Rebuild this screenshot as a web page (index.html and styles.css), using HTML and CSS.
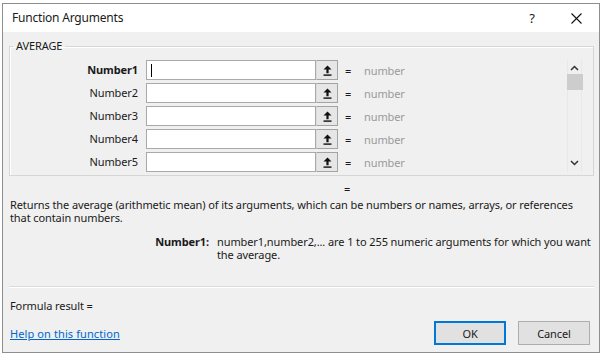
FILE: index.html
```html
<!DOCTYPE html>
<html>
<head>
<meta charset="utf-8">
<link rel="stylesheet" href="styles.css">
</head>
<body>
<div class="dialog">
  <div class="titlebar">
    <span class="title">Function Arguments</span>
    <span class="cap-btn help">?</span>
    <span class="cap-btn close">
      <svg width="11" height="11" viewBox="0 0 11 11"><path d="M0.5 0.5 L10.5 10.5 M10.5 0.5 L0.5 10.5" stroke="#111" stroke-width="1.1" fill="none"/></svg>
    </span>
  </div>
  <div class="content">
    <fieldset class="group">
      <legend>AVERAGE</legend>
      <div class="args">
        <div class="scrollbar">
          <svg class="arrow" width="9" height="6" viewBox="0 0 9 6"><path d="M1 5 L4.5 1.5 L8 5" stroke="#333" stroke-width="1.5" fill="none"/></svg>
          <div class="thumb"></div>
          <div class="track"></div>
          <svg class="arrow" width="9" height="6" viewBox="0 0 9 6"><path d="M1 1 L4.5 4.5 L8 1" stroke="#333" stroke-width="1.5" fill="none"/></svg>
        </div>

        <div class="arg-label bold">Number1</div>
        <div class="arg-input"><span class="caret"></span></div>
        <div class="ref-btn"><svg width="9" height="11" viewBox="0 0 9 11"><path d="M4.5 0.5 L8.5 4.5 H5.6 V8.2 H3.4 V4.5 H0.5 Z" fill="#111"/><rect x="0.5" y="9.4" width="8" height="1.4" fill="#111"/></svg></div>
        <div class="eq">=</div>
        <div class="hint">number</div>

        <div class="arg-label">Number2</div>
        <div class="arg-input"></div>
        <div class="ref-btn"><svg width="9" height="11" viewBox="0 0 9 11"><path d="M4.5 0.5 L8.5 4.5 H5.6 V8.2 H3.4 V4.5 H0.5 Z" fill="#111"/><rect x="0.5" y="9.4" width="8" height="1.4" fill="#111"/></svg></div>
        <div class="eq">=</div>
        <div class="hint">number</div>

        <div class="arg-label">Number3</div>
        <div class="arg-input"></div>
        <div class="ref-btn"><svg width="9" height="11" viewBox="0 0 9 11"><path d="M4.5 0.5 L8.5 4.5 H5.6 V8.2 H3.4 V4.5 H0.5 Z" fill="#111"/><rect x="0.5" y="9.4" width="8" height="1.4" fill="#111"/></svg></div>
        <div class="eq">=</div>
        <div class="hint">number</div>

        <div class="arg-label">Number4</div>
        <div class="arg-input"></div>
        <div class="ref-btn"><svg width="9" height="11" viewBox="0 0 9 11"><path d="M4.5 0.5 L8.5 4.5 H5.6 V8.2 H3.4 V4.5 H0.5 Z" fill="#111"/><rect x="0.5" y="9.4" width="8" height="1.4" fill="#111"/></svg></div>
        <div class="eq">=</div>
        <div class="hint">number</div>

        <div class="arg-label">Number5</div>
        <div class="arg-input"></div>
        <div class="ref-btn"><svg width="9" height="11" viewBox="0 0 9 11"><path d="M4.5 0.5 L8.5 4.5 H5.6 V8.2 H3.4 V4.5 H0.5 Z" fill="#111"/><rect x="0.5" y="9.4" width="8" height="1.4" fill="#111"/></svg></div>
        <div class="eq">=</div>
        <div class="hint">number</div>
      </div>
    </fieldset>

    <div class="result-eq">=</div>
    <p class="desc">Returns the average (arithmetic mean) of its arguments, which can be numbers or names, arrays, or references that contain numbers.</p>
    <div class="arg-help">
      <span class="arg-help-name">Number1:</span>
      <span class="arg-help-text">number1,number2,... are 1 to 255 numeric arguments for which you want the average.</span>
    </div>

    <div class="separator"></div>
    <div class="formula">Formula result =</div>
    <div class="footer">
      <a class="help-link" href="#">Help on this function</a>
      <div class="buttons">
        <span class="btn ok">OK</span>
        <span class="btn">Cancel</span>
      </div>
    </div>
  </div>
</div>
</body>
</html>
```

FILE: styles.css
```css
html, body {
  margin: 0;
  padding: 0;
}
body {
  width: 602px;
  height: 356px;
  background: #ffffff;
  font-family: "Noto Sans", "Open Sans", sans-serif;
  font-size: 11px;
  letter-spacing: -0.1px;
  color: #1a1a1a;
  overflow: hidden;
}
.dialog {
  box-sizing: border-box;
  width: 598px;
  height: 350px;
  margin: 3px 0 0 2px;
  border: 1px solid #8e8e8e;
  background: #f0f0f0;
  display: flex;
  flex-direction: column;
}
.titlebar {
  height: 28px;
  flex: none;
  background: #ffffff;
  display: flex;
  align-items: center;
  padding-left: 9px;
}
.title {
  flex: 1;
  font-size: 12px;
  letter-spacing: -0.2px;
  line-height: 16px;
}
.cap-btn {
  width: 44px;
  height: 28px;
  display: flex;
  align-items: center;
  justify-content: center;
}
.help {
  font-size: 13px;
}
.close {
  margin-right: 1px;
}
.content {
  padding: 0 5px 0 6px;
  display: flex;
  flex-direction: column;
}
.group {
  margin: 6px 0 0 0;
  padding: 6px 9px 3px 0;
  border: 1px solid #d6d6d6;
  box-shadow: inset 1px 1px 0 #ffffff;
}
.group legend {
  padding: 0 3px;
  margin-left: 3px;
  line-height: 16px;
  color: #1a1a1a;
}
.args {
  display: grid;
  grid-template-columns: 136px 170px 22px 20px 50px 1fr 17px;
  grid-auto-rows: 20px;
  row-gap: 3px;
  align-items: center;
}
.arg-label {
  grid-column: 1;
  text-align: right;
  padding-right: 8px;
  line-height: 20px;
}
.bold {
  font-weight: bold;
}
.arg-input {
  grid-column: 2;
  box-sizing: border-box;
  height: 20px;
  background: #ffffff;
  border: 1px solid #a9a9a9;
  display: flex;
  align-items: center;
  padding-left: 4px;
}
.caret {
  width: 1px;
  height: 13px;
  background: #000;
}
.ref-btn {
  grid-column: 3;
  box-sizing: border-box;
  height: 20px;
  background: #e6e6e6;
  border: 1px solid #a3a3a3;
  border-left-color: #dcdcdc;
  display: flex;
  align-items: center;
  justify-content: center;
}
.eq {
  grid-column: 4;
  text-align: center;
}
.hint {
  grid-column: 5;
  color: #9a9a9a;
  padding-left: 6px;
}
.scrollbar {
  grid-column: 7;
  grid-row: 1 / span 5;
  align-self: stretch;
  display: flex;
  flex-direction: column;
  align-items: center;
  padding: 5px 0 6px;
  margin-right: 2px;
  border-left: 1px solid #e8e8e8;
  border-right: 1px solid #e8e8e8;
}
.arrow {
  flex: none;
}
.thumb {
  margin-top: 3px;
  width: 16px;
  height: 16px;
  background: #cdcdcd;
}
.track {
  flex: 1;
}
.result-eq {
  margin-top: 5px;
  line-height: 16px;
  padding-left: 335px;
}
.desc {
  margin: 1px 0 0 1px;
  line-height: 13px;
}
.arg-help {
  margin-top: 11px;
  display: grid;
  grid-template-columns: 200px 1fr;
  column-gap: 8px;
  line-height: 13px;
}
.arg-help-name {
  font-weight: bold;
  text-align: right;
}
.separator {
  margin-top: 25px;
  height: 1px;
  background: #dadada;
  border-bottom: 1px solid #ffffff;
}
.formula {
  margin: 10px 0 0 1px;
  line-height: 16px;
}
.footer {
  margin-top: 7px;
  display: flex;
  align-items: center;
  justify-content: space-between;
  padding-left: 1px;
}
.help-link {
  color: #0066cc;
  text-decoration: underline;
  letter-spacing: 0.1px;
}
.buttons {
  display: flex;
  gap: 12px;
  margin-right: 4px;
}
.btn {
  box-sizing: border-box;
  width: 72px;
  height: 24px;
  background: #e1e1e1;
  border: 1px solid #adadad;
  display: flex;
  align-items: center;
  justify-content: center;
}
.btn.ok {
  border: 2px solid #0078d7;
}
```
